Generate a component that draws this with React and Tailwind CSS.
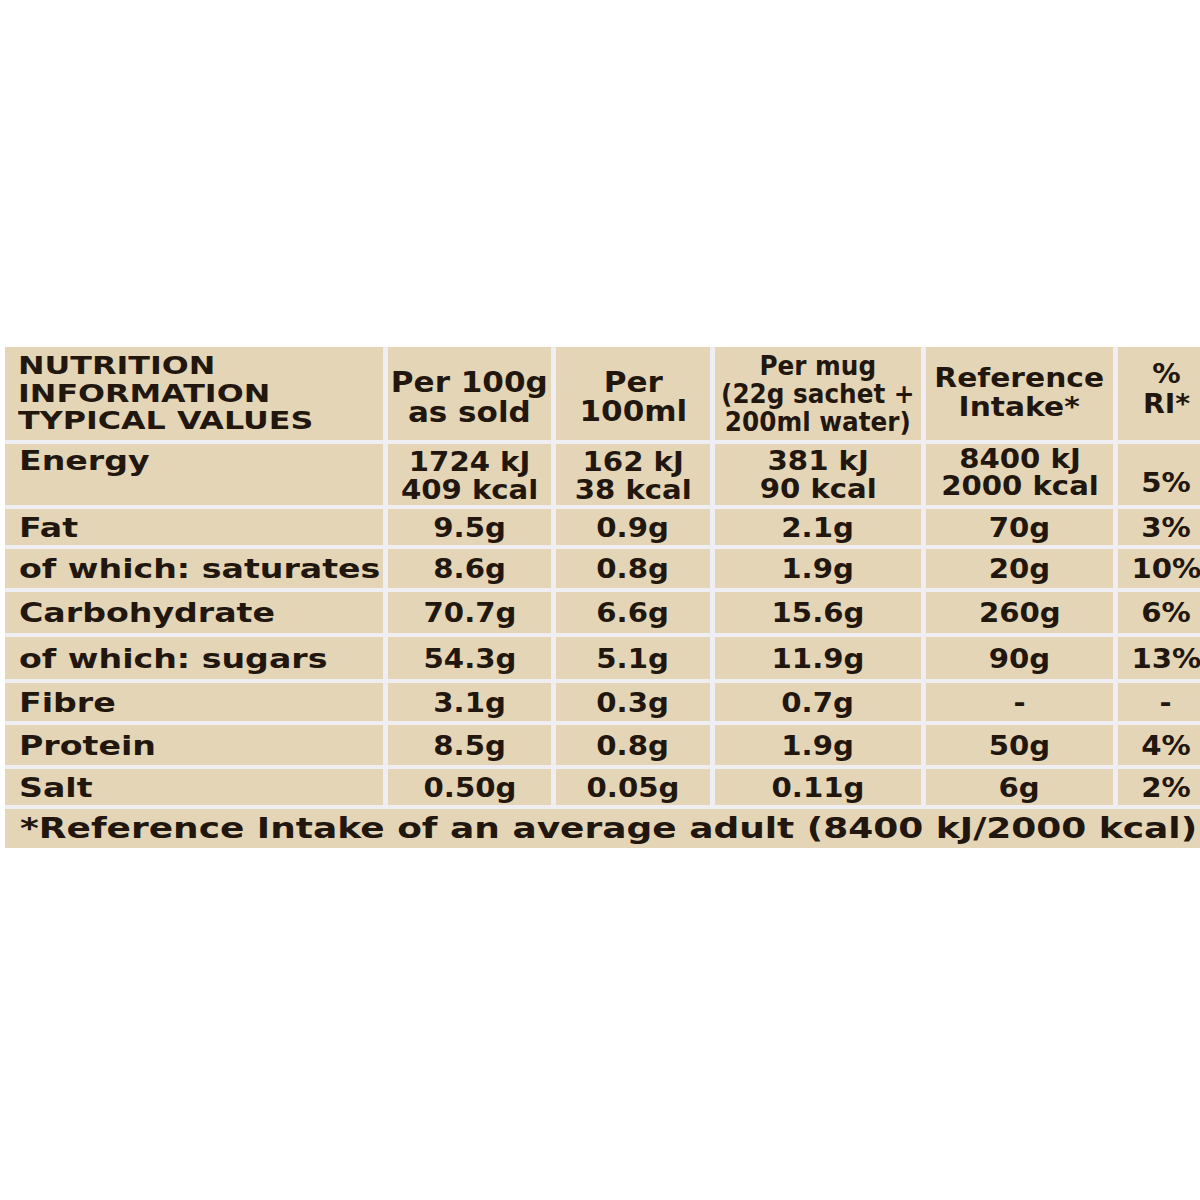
import React from 'react';

const rows = [
  { label: 'Fat', values: ['9.5g', '0.9g', '2.1g', '70g', '3%'] },
  { label: 'of which: saturates', values: ['8.6g', '0.8g', '1.9g', '20g', '10%'] },
  { label: 'Carbohydrate', values: ['70.7g', '6.6g', '15.6g', '260g', '6%'] },
  { label: 'of which: sugars', values: ['54.3g', '5.1g', '11.9g', '90g', '13%'] },
  { label: 'Fibre', values: ['3.1g', '0.3g', '0.7g', '-', '-'] },
  { label: 'Protein', values: ['8.5g', '0.8g', '1.9g', '50g', '4%'] },
  { label: 'Salt', values: ['0.50g', '0.05g', '0.11g', '6g', '2%'] },
];

const cell = 'bg-[#e5d5b7]';

const Wide = ({ children, className = 'scale-x-[1.08] origin-center' }) => (
  <span className={`inline-block ${className}`}>{children}</span>
);

const Label = ({ children }) => (
  <div className={`${cell} flex items-center pl-[14px] whitespace-nowrap`}>
    <Wide className="scale-x-[1.23] origin-left">{children}</Wide>
  </div>
);

const Value = ({ children }) => (
  <div className={`${cell} flex items-center justify-center whitespace-nowrap`}>
    <Wide>{children}</Wide>
  </div>
);

export default function App() {
  return (
    <div className="w-[1200px] h-[1200px] bg-white overflow-hidden pt-[347px] pl-[5px] font-['DejaVu_Sans',sans-serif] font-bold text-[#22170f] text-[27px] leading-[27px]">
      <div className="grid w-max bg-[#efeef2] gap-x-[5px] gap-y-[4px] grid-cols-[378px_163px_154px_206px_187px_96px] grid-rows-[93px_61px_36px_39px_41px_42px_38px_40px_36px_39px]">
        {/* header */}
        <div className={`${cell} flex items-center pl-[13px] text-[25px] leading-[27.5px]`}>
          <Wide className="scale-x-[1.27] origin-left">
            <div>NUTRITION</div>
            <div>INFORMATION</div>
            <div>TYPICAL VALUES</div>
          </Wide>
        </div>
        <div className={`${cell} flex items-center justify-center text-center text-[29px] leading-[30px] pt-[7px]`}>
          <Wide className="scale-x-[1.07] origin-center">
            <div>Per 100g</div>
            <div>as sold</div>
          </Wide>
        </div>
        <div className={`${cell} flex items-center justify-center text-center text-[29px] leading-[29px] pt-[7px]`}>
          <Wide className="scale-x-[1.07] origin-center">
            <div>Per</div>
            <div>100ml</div>
          </Wide>
        </div>
        <div className={`${cell} flex items-center justify-center text-center text-[26px] leading-[28px] whitespace-nowrap`}>
          <Wide className="scale-x-[0.95] origin-center">
            <div>Per mug</div>
            <div>(22g sachet +</div>
            <div>200ml water)</div>
          </Wide>
        </div>
        <div className={`${cell} flex items-center justify-center text-center text-[27px] leading-[29px] pb-[4px]`}>
          <Wide className="scale-x-[1.1] origin-center">
            <div>Reference</div>
            <div>Intake*</div>
          </Wide>
        </div>
        <div className={`${cell} flex items-center justify-center text-center text-[27px] leading-[30px] pb-[10px]`}>
          <Wide className="scale-x-[1.05] origin-center">
            <div>%</div>
            <div>RI*</div>
          </Wide>
        </div>

        {/* energy */}
        <div className={`${cell} pl-[14px] pt-[3px]`}>
          <Wide className="scale-x-[1.23] origin-left">Energy</Wide>
        </div>
        <div className={`${cell} flex items-center justify-center text-center pt-[2px] leading-[27.5px]`}>
          <Wide>
            <div>1724 kJ</div>
            <div>409 kcal</div>
          </Wide>
        </div>
        <div className={`${cell} flex items-center justify-center text-center pt-[2px] leading-[27.5px]`}>
          <Wide>
            <div>162 kJ</div>
            <div>38 kcal</div>
          </Wide>
        </div>
        <div className={`${cell} flex items-center justify-center text-center leading-[27.5px]`}>
          <Wide>
            <div>381 kJ</div>
            <div>90 kcal</div>
          </Wide>
        </div>
        <div className={`${cell} flex items-center justify-center text-center pb-[5px] leading-[27.5px]`}>
          <Wide>
            <div>8400 kJ</div>
            <div>2000 kcal</div>
          </Wide>
        </div>
        <div className={`${cell} flex items-end justify-center pb-[9px]`}>
          <Wide>5%</Wide>
        </div>

        {rows.map((r) => (
          <React.Fragment key={r.label}>
            <Label>{r.label}</Label>
            {r.values.map((v, i) => (
              <Value key={i}>{v}</Value>
            ))}
          </React.Fragment>
        ))}

        {/* footnote */}
        <div className={`${cell} col-span-6 flex items-center pl-[15px] text-[29px] whitespace-nowrap`}>
          <Wide className="scale-x-[1.24] origin-left">
            *Reference Intake of an average adult (8400 kJ/2000 kcal)
          </Wide>
        </div>
      </div>
    </div>
  );
}
